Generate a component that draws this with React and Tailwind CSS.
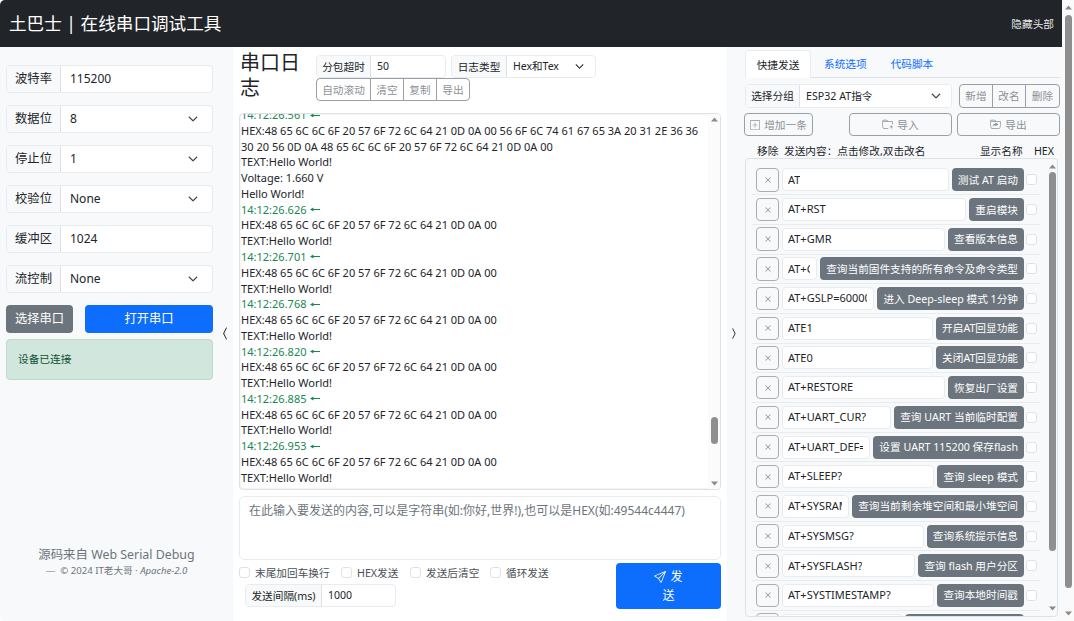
import React from 'react';
import {
  BsChevronDown,
  BsChevronCompactLeft,
  BsChevronCompactRight,
  BsSend,
  BsPlusSquare,
  BsFolderPlus,
  BsFolderSymlink,
  BsX,
} from 'react-icons/bs';

const settings = [
  { label: '波特率', value: '115200' },
  { label: '数据位', value: '8', select: true },
  { label: '停止位', value: '1', select: true },
  { label: '校验位', value: 'None', select: true },
  { label: '缓冲区', value: '1024' },
  { label: '流控制', value: 'None', select: true },
];

const commands = [
  ['AT', '测试 AT 启动'],
  ['AT+RST', '重启模块'],
  ['AT+GMR', '查看版本信息'],
  ['AT+CMD?', '查询当前固件支持的所有命令及命令类型'],
  ['AT+GSLP=60000', '进入 Deep-sleep 模式 1分钟'],
  ['ATE1', '开启AT回显功能'],
  ['ATE0', '关闭AT回显功能'],
  ['AT+RESTORE', '恢复出厂设置'],
  ['AT+UART_CUR?', '查询 UART 当前临时配置'],
  ['AT+UART_DEF=115200,8,1,0,0', '设置 UART 115200 保存flash'],
  ['AT+SLEEP?', '查询 sleep 模式'],
  ['AT+SYSRAM?', '查询当前剩余堆空间和最小堆空间'],
  ['AT+SYSMSG?', '查询系统提示信息'],
  ['AT+SYSFLASH?', '查询 flash 用户分区'],
  ['AT+SYSTIMESTAMP?', '查询本地时间戳'],
  ['AT+SYSLOG?', '查询错误日志开关状态'],
];

const HELLO_HEX = 'HEX:48 65 6C 6C 6F 20 57 6F 72 6C 64 21 0D 0A 00';
const times = ['14:12:26.626', '14:12:26.701', '14:12:26.768', '14:12:26.820', '14:12:26.885', '14:12:26.953'];

function Arrow({ up }) {
  return (
    <svg width="7" height="5" viewBox="0 0 7 5" className="shrink-0">
      <path d={up ? 'M3.5 0.5L7 4.5H0Z' : 'M3.5 4.5L7 0.5H0Z'} fill="#8a8a8a" />
    </svg>
  );
}

function Time({ value }) {
  return (
    <div className="flex items-center gap-[4px] text-[#198754]">
      <span>{value}</span>
      <svg width="10" height="5" viewBox="0 0 10 5">
        <path d="M0 2.5L3.5 0.5V2H10V3H3.5V4.5Z" fill="#198754" />
      </svg>
    </div>
  );
}

function SettingRow({ label, value, select }) {
  return (
    <div className="flex h-[28px] overflow-hidden rounded-[4px] border border-[#e9ecef] bg-white text-[12px]">
      <div className="flex w-[54px] shrink-0 items-center justify-center border-r border-[#dee2e6] bg-[#f8f9fa] text-[12.3px]">{label}</div>
      <div className="flex flex-1 items-center justify-between pl-[9px] pr-[14px]">
        <span>{value}</span>
        {select && <BsChevronDown className="text-[10px] [stroke-width:1]" />}
      </div>
    </div>
  );
}

function OutlineButton({ children, className }) {
  return (
    <div className={`flex items-center justify-center border border-[#9aa0a6] text-[#8b9197] ${className}`}>{children}</div>
  );
}

function CheckItem({ label, className }) {
  return (
    <div className={`flex items-center ${className}`}>
      <span className="h-[11px] w-[11px] rounded-[3px] border border-[#dee2e6] bg-white" />
      <span className="ml-[5px]">{label}</span>
    </div>
  );
}

function CommandRow({ command, name }) {
  return (
    <div className="flex h-[29.7px] shrink-0 items-center border-b border-[#e9ecef] pl-[4px]">
      <div className="flex h-[23.5px] w-[23px] shrink-0 items-center justify-center rounded-[4px] border border-[#a9aeb3] text-[#8b9197]">
        <BsX className="text-[12px]" />
      </div>
      <div className="ml-[3px] flex h-[23px] min-w-0 flex-1 items-center overflow-hidden whitespace-nowrap rounded-[4px] border border-[#e9ecef] bg-white pl-[5px] pr-[6px] text-[11px]">
        <span className="block overflow-hidden">{command}</span>
      </div>
      <div className="ml-[3px] flex h-[23px] shrink-0 items-center whitespace-nowrap rounded-[4px] bg-[#6c757d] px-[6px] text-[10.67px] text-white">
        {name}
      </div>
      <span className="ml-[2px] mr-[3px] h-[11px] w-[11px] shrink-0 rounded-[3px] border border-[#dee2e6] bg-white" />
    </div>
  );
}

export default function App() {
  return (
    <div className="flex h-[621px] w-[1074px] overflow-hidden bg-white font-['Noto_Sans','Noto_Sans_CJK_SC',sans-serif] text-[11px] text-[#212529]">
      <div className="flex min-w-0 flex-1 flex-col overflow-hidden rounded-l-[5px]">
        <header className="flex h-[47px] shrink-0 items-center justify-between bg-[#212529] pl-[9px] pr-[8px] text-white">
          <h1 className="text-[17.6px] font-normal">土巴士 | 在线串口调试工具</h1>
          <span className="text-[10.67px] text-[#e8e8e8]">隐藏头部</span>
        </header>

        <div className="flex min-h-0 flex-1">
          <aside className="flex w-[233px] shrink-0 bg-[#f8f9fa] pl-[6px]">
            <div className="flex w-[207px] shrink-0 flex-col pt-[18px]">
              <div className="flex flex-col gap-[12px]">
                {settings.map((item) => (
                  <SettingRow key={item.label} {...item} />
                ))}
              </div>
              <div className="mt-[12px] flex gap-[12px] text-[12.3px] text-white">
                <div className="flex h-[28px] w-[67px] items-center justify-center rounded-[4px] bg-[#6c757d]">选择串口</div>
                <div className="flex h-[28px] flex-1 items-center justify-center rounded-[4px] bg-[#0d6efd]">打开串口</div>
              </div>
              <div className="mt-[6px] flex h-[41px] items-center rounded-[4px] border border-[#badbcc] bg-[#d1e7dd] pb-[2px] pl-[11px] text-[10.67px] text-[#0f5132]">
                设备已连接
              </div>
              <div className="mr-[-14px] mt-[166px] text-center text-[#6c757d]">
                <div className="text-[12.4px] leading-[18px]">源码来自 Web Serial Debug</div>
                <div className="text-[9.6px] leading-[13px]">
                  — &nbsp;© 2024 IT老大哥 · <em>Apache-2.0</em>
                </div>
              </div>
            </div>
            <div className="flex flex-1 items-center justify-center pl-[4px]">
              <BsChevronCompactLeft className="mt-[-2px] text-[15px] text-[#212529]" />
            </div>
          </aside>

          <main className="flex w-[494px] shrink-0 flex-col bg-white pl-[6px] pr-[6px]">
            <div className="flex h-[66px] shrink-0 pt-[3px]">
              <h2 className="w-[77px] shrink-0 pl-[1px] text-[20px] font-normal leading-[25px]">串口日志</h2>
              <div className="mt-[-1px] flex flex-col pt-[6px]">
                <div className="flex gap-[5px]">
                  <div className="flex h-[23px] w-[130px] overflow-hidden rounded-[4px] border border-[#e9ecef] text-[10.5px]">
                    <div className="flex w-[54px] items-center justify-center border-r border-[#dee2e6] bg-[#f8f9fa] text-[10.67px]">分包超时</div>
                    <div className="flex items-center pl-[6px]">50</div>
                  </div>
                  <div className="flex h-[23px] w-[145px] overflow-hidden rounded-[4px] border border-[#e9ecef] text-[10.5px]">
                    <div className="flex w-[55px] items-center justify-center border-r border-[#dee2e6] bg-[#f8f9fa] text-[10.67px]">日志类型</div>
                    <div className="flex flex-1 items-center justify-between pl-[6px] pr-[11px]">
                      <span className="w-[46px] overflow-hidden whitespace-nowrap">Hex和Text</span>
                      <BsChevronDown className="text-[9px] [stroke-width:1]" />
                    </div>
                  </div>
                </div>
                <div className="flex h-[23px] text-[10.67px]">
                  <OutlineButton className="w-[55px] rounded-l-[4px]">自动滚动</OutlineButton>
                  <OutlineButton className="ml-[-1px] w-[34px]">清空</OutlineButton>
                  <OutlineButton className="ml-[-1px] w-[34px]">复制</OutlineButton>
                  <OutlineButton className="ml-[-1px] w-[34px] rounded-r-[4px]">导出</OutlineButton>
                </div>
              </div>
            </div>

            <div className="flex h-[377px] shrink-0 overflow-hidden rounded-[4px] border border-[#dee2e6] shadow-[inset_0_0_2px_rgba(0,0,0,0.15)]">
              <div className="flex min-w-0 flex-1 flex-col justify-end overflow-hidden pb-[3.5px] pl-[1px] pr-[6px] leading-[15.77px]">
                <Time value="14:12:26.561" />
                <div>HEX:48 65 6C 6C 6F 20 57 6F 72 6C 64 21 0D 0A 00 56 6F 6C 74 61 67 65 3A 20 31 2E 36 36</div>
                <div>30 20 56 0D 0A 48 65 6C 6C 6F 20 57 6F 72 6C 64 21 0D 0A 00</div>
                <div>TEXT:Hello World!</div>
                <div>Voltage: 1.660 V</div>
                <div>Hello World!</div>
                {times.map((t) => (
                  <div key={t}>
                    <Time value={t} />
                    <div>{HELLO_HEX}</div>
                    <div>TEXT:Hello World!</div>
                  </div>
                ))}
              </div>
              <div className="flex w-[12px] shrink-0 flex-col items-center bg-[#fbfbfb] py-[3px]">
                <Arrow up />
                <div className="flex-1" />
                <div className="mb-[37px] h-[27px] w-[7px] rounded-[4px] bg-[#8f8f8f]" />
                <Arrow />
              </div>
            </div>

            <div className="mt-[6px] h-[64px] shrink-0 rounded-[5px] border border-[#e9ecef] px-[9px] py-[5px] text-[12px] text-[#6c757d]">
              在此输入要发送的内容,可以是字符串(如:你好,世界!),也可以是HEX(如:49544c4447)
            </div>

            <div className="mt-[3px] flex">
              <div className="flex-1">
                <div className="flex h-[18px] items-center pt-[1px] text-[10.67px] text-[#495057]">
                  <CheckItem label="末尾加回车换行" className="w-[102px]" />
                  <CheckItem label="HEX发送" className="w-[69px]" />
                  <CheckItem label="发送后清空" className="w-[80px]" />
                  <CheckItem label="循环发送" />
                </div>
                <div className="ml-[6px] mt-[3px] flex h-[23px] w-[151px] overflow-hidden rounded-[4px] border border-[#e9ecef] text-[10.5px]">
                  <div className="flex w-[76px] items-center justify-center border-r border-[#dee2e6] bg-[#f8f9fa] text-[10.67px]">发送间隔(ms)</div>
                  <div className="flex items-center pl-[6px]">1000</div>
                </div>
              </div>
              <div className="flex h-[46px] w-[105px] shrink-0 flex-col items-center justify-center rounded-[4px] bg-[#0d6efd] text-[12px] leading-[19px] text-white">
                <div className="flex items-center gap-[4px]">
                  <BsSend className="text-[12px]" />
                  <span>发</span>
                </div>
                <div>送</div>
              </div>
            </div>
          </main>

          <aside className="flex min-w-0 flex-1 bg-[#f8f9fa]">
            <div className="flex w-[18px] shrink-0 items-center justify-center pr-[5px]">
              <BsChevronCompactRight className="mt-[-2px] text-[15px] text-[#212529]" />
            </div>
            <div className="flex w-[315px] shrink-0 flex-col pt-[3px]">
              <div className="flex h-[28px] shrink-0 items-stretch border-b border-[#dee2e6] text-[10.67px]">
                <div className="mb-[-1px] flex w-[66px] items-center justify-center rounded-t-[4px] border border-b-0 border-[#e9ecef] bg-white">快捷发送</div>
                <div className="ml-[13px] flex items-center text-[#0d6efd]">系统选项</div>
                <div className="ml-[24px] flex items-center text-[#0d6efd]">代码脚本</div>
              </div>

              <div className="mt-[6px] flex h-[24px] shrink-0 text-[10.67px]">
                <div className="flex w-[207px] overflow-hidden rounded-[4px] border border-[#e9ecef]">
                  <div className="flex w-[54px] items-center justify-center border-r border-[#dee2e6] bg-[#f8f9fa]">选择分组</div>
                  <div className="flex flex-1 items-center justify-between bg-white pl-[6px] pr-[10px]">
                    <span>ESP32 AT指令</span>
                    <BsChevronDown className="text-[10px] [stroke-width:1]" />
                  </div>
                </div>
                <div className="ml-[7px] flex flex-1">
                  <OutlineButton className="w-[34px] rounded-l-[4px]">新增</OutlineButton>
                  <OutlineButton className="ml-[-1px] w-[34px]">改名</OutlineButton>
                  <OutlineButton className="ml-[-1px] flex-1 rounded-r-[4px]">删除</OutlineButton>
                </div>
              </div>

              <div className="mt-[5px] flex h-[23px] shrink-0 text-[10.67px]">
                <OutlineButton className="ml-[-1px] w-[69px] gap-[4px] rounded-[4px]">
                  <BsPlusSquare className="text-[10px]" /> 增加一条
                </OutlineButton>
                <OutlineButton className="ml-[36px] w-[103px] gap-[4px] rounded-[4px]">
                  <BsFolderPlus className="text-[11px]" /> 导入
                </OutlineButton>
                <OutlineButton className="ml-[5px] w-[103px] gap-[4px] rounded-[4px]">
                  <BsFolderSymlink className="text-[11px]" /> 导出
                </OutlineButton>
              </div>

              <div className="mt-[5px] flex h-[17px] shrink-0 items-center pl-[12px] pr-[6px] pt-[3px] text-[10.67px]">
                <span className="w-[27px]">移除</span>
                <span className="flex-1">发送内容：点击修改,双击改名</span>
                <span className="w-[54px]">显示名称</span>
                <span>HEX</span>
              </div>

              <div className="flex h-[459px] w-[313px] shrink-0 overflow-hidden rounded-[4px] border border-[#dee2e6] pl-[6px]">
                <div className="flex min-w-0 flex-1 flex-col overflow-hidden pt-[6.5px]">
                  {commands.map(([command, name]) => (
                    <CommandRow key={command} command={command} name={name} />
                  ))}
                </div>
                <div className="flex w-[17px] shrink-0 flex-col items-end py-[5px] pr-[1px]">
                  <Arrow up />
                  <div className="mt-[3px] h-[379px] w-[7px] rounded-[4px] bg-[#8f8f8f]" />
                  <div className="flex-1" />
                  <Arrow />
                </div>
              </div>
            </div>
          </aside>
        </div>
      </div>

      <div className="flex w-[12px] shrink-0 flex-col items-center bg-[#fafafa] py-[5px]">
        <Arrow up />
        <div className="mt-[5px] h-[573px] w-[7px] rounded-[4px] bg-[#8f8f8f]" />
        <div className="flex-1" />
        <Arrow />
      </div>
    </div>
  );
}
